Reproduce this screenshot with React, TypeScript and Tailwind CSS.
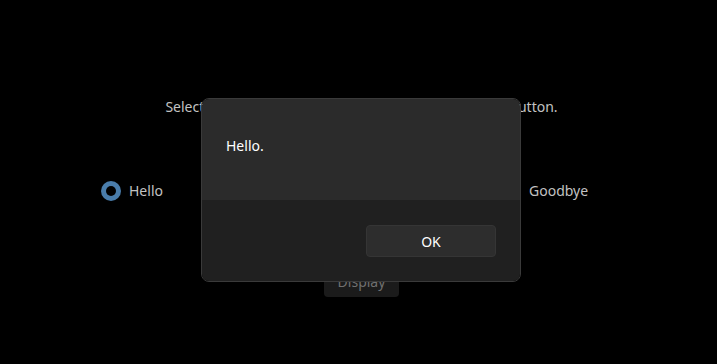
import React from 'react';

function Radio({ label, checked }: { label: string; checked?: boolean }) {
  return (
    <div className="flex items-center gap-2">
      <div
        className={`w-5 h-5 rounded-full flex items-center justify-center ${
          checked ? 'bg-[#4a7dab]' : 'border border-[#8a8a8a]'
        }`}
      >
        {checked && <div className="w-[10px] h-[10px] rounded-full bg-black" />}
      </div>
      <span className="text-[14px] text-[#c2c2c2]">{label}</span>
    </div>
  );
}

export default function App() {
  return (
    <div
      className="relative w-full h-[364px] bg-black overflow-hidden"
      style={{ fontFamily: '"Noto Sans", "Open Sans", sans-serif' }}
    >
      <div className="flex flex-col pt-[97px]">
        <div className="h-5 leading-5 text-[14px] text-[#c2c2c2] text-center pl-[6px]">
          Select an option below and then click on the Display button.
        </div>

        <div className="mt-[63px] flex pl-[101px]">
          <div className="w-[400px]">
            <Radio label="Hello" checked />
          </div>
          <Radio label="Goodbye" />
        </div>

        <div className="mt-[64px] ml-[324px]">
          <button className="w-[75px] h-8 rounded-[4px] bg-[#1b1b1b] text-[14px] text-[#707070]">
            Display
          </button>
        </div>
      </div>

      {/* content dialog */}
      <div className="absolute left-[201px] top-[98px] w-[320px] h-[184px] rounded-lg border border-[#3a3a3a] overflow-hidden flex flex-col">
        <div className="h-[101px] bg-[#2b2b2b] px-6 pt-[37px]">
          <p className="text-[14px] leading-5 text-white">Hello.</p>
        </div>
        <div className="flex-1 bg-[#202020] flex items-end justify-end px-6 pb-6">
          <button className="w-[130px] h-8 rounded-[4px] bg-[#2d2d2d] border border-[#353535] text-[14px] text-white">
            OK
          </button>
        </div>
      </div>
    </div>
  );
}
